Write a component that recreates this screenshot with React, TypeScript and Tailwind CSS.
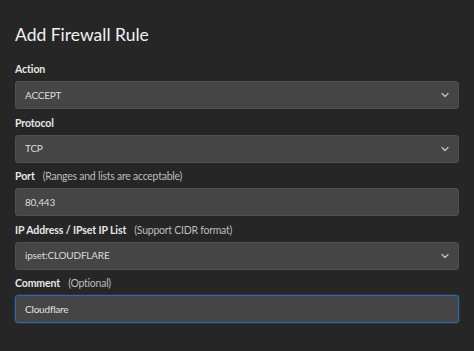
import type React from "react";

// Kleiner Chevron wie im Original-Select.
function Chevron(): React.ReactElement {
  return (
    <svg width="8" height="6" viewBox="0 0 8 6" className="shrink-0">
      <path d="M1 1.5 L4 4.5 L7 1.5" fill="none" stroke="#bdbdbd" strokeWidth="1.4" strokeLinecap="round" strokeLinejoin="round" />
    </svg>
  );
}

function Label({ title, hint }: { title: string; hint?: string }): React.ReactElement {
  return (
    <div className="h-[25.5px] flex items-end pb-[3px] leading-[18px] text-[10.5px]">
      <span className="font-bold text-[#e6e6e6] tracking-[-0.1px]">{title}</span>
      {hint && <span className="ml-[8px] text-[#bcbcbc] tracking-[-0.25px]">{hint}</span>}
    </div>
  );
}

function Field({ value, select, focused }: { value: string; select?: boolean; focused?: boolean }): React.ReactElement {
  return (
    <div
      className={
        focused
          ? "h-[28px] rounded-[3px] bg-[#454545] border border-[#2d6aa3] shadow-[0_0_0_1px_rgba(45,106,163,0.25)] flex items-center px-[9px] text-[10px] tracking-[-0.2px] text-[#e2e2e2]"
          : "h-[28px] rounded-[3px] bg-[#454545] border border-[#505050] flex items-center px-[9px] text-[10px] tracking-[-0.2px] text-[#dcdcdc]"
      }
    >
      <span className="flex-1">{value}</span>
      {select && <Chevron />}
    </div>
  );
}

export default function App(): React.ReactElement {
  return (
    <div className="w-[474px] h-[351px] bg-[#262626] px-[15px] pt-[21px] font-['Lato','Liberation_Sans',sans-serif] overflow-hidden">
      <h1 className="text-[17.5px] leading-[28px] text-[#f0f0f0] mb-[6.5px]">Add Firewall Rule</h1>
      <Label title="Action" />
      <Field value="ACCEPT" select />
      <Label title="Protocol" />
      <Field value="TCP" select />
      <Label title="Port" hint="(Ranges and lists are acceptable)" />
      <Field value="80,443" />
      <Label title="IP Address / IPset IP List" hint="(Support CIDR format)" />
      <Field value="ipset:CLOUDFLARE" select />
      <Label title="Comment" hint="(Optional)" />
      <Field value="Cloudflare" focused />
    </div>
  );
}
